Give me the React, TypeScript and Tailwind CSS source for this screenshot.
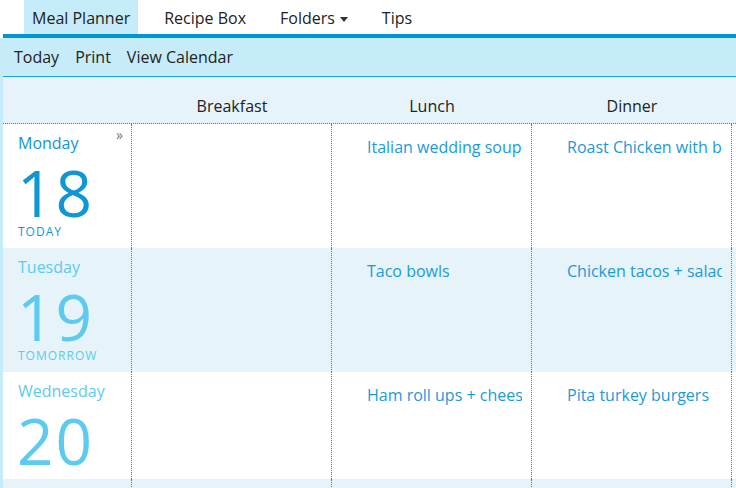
import React from "react";

type Day = {
  name: string;
  date: number;
  label?: string;
  today?: boolean;
  shaded?: boolean;
  height: string;
  meals: string[];
};

const days: Day[] = [
  { name: "Monday", date: 18, label: "TODAY", today: true, height: "h-[124px]", meals: ["", "Italian wedding soup", "Roast Chicken with broccoli", ""] },
  { name: "Tuesday", date: 19, label: "TOMORROW", shaded: true, height: "h-[124px]", meals: ["", "Taco bowls", "Chicken tacos + salad", ""] },
  { name: "Wednesday", date: 20, height: "h-[107px]", meals: ["", "Ham roll ups + cheese", "Pita turkey burgers", ""] },
  { name: "Thursday", date: 21, shaded: true, height: "h-[124px]", meals: ["", "", "", ""] },
];

const tabs = ["Meal Planner", "Recipe Box", "Folders", "Tips"];

function DayRow({ day }: { day: Day }) {
  const tone = day.today ? "text-[#0f96d6]" : "text-[#5ccbef]";
  return (
    <div className={`flex ${day.height} ${day.shaded ? "bg-[#e6f3f9]" : "bg-white"}`}>
      <div className="relative w-[129px] shrink-0 border-r border-dotted border-[#1a8bc4] pl-[15px] pt-[8px]">
        {day.today && <span className="absolute right-[8px] top-0 text-[14px] text-[#777]">»</span>}
        <div className={`text-[16px] leading-[22px] ${tone}`}>{day.name}</div>
        <div className={`-ml-[1px] mt-[13px] text-[64px] leading-[52px] tracking-[2px] ${tone}`}>{day.date}</div>
        {day.label && (
          <div className={`mt-[6px] text-[12px] leading-[14px] tracking-[1px] ${tone}`}>{day.label}</div>
        )}
      </div>
      {day.meals.map((m, i) => (
        <div
          key={i}
          className="w-[200px] shrink-0 border-r border-dotted border-[#1a8bc4] pl-[35px] pr-[9px] pt-[12px]"
        >
          <div className="overflow-hidden whitespace-nowrap text-[16px] leading-[22px] text-[#1b9ad8]">{m}</div>
        </div>
      ))}
    </div>
  );
}

export default function App() {
  return (
    <div className="h-[488px] w-[736px] overflow-hidden bg-white font-['Open_Sans',sans-serif] text-[#222]">
      <div className="flex h-[34px] items-stretch gap-[18px] pl-[24px]">
        {tabs.map((t, i) => (
          <div
            key={t}
            className={`flex items-center px-[8px] pt-[2px] text-[16px] ${i === 0 ? "bg-[#c6ecf9]" : ""}`}
          >
            {t}
            {t === "Folders" && (
              <span className="ml-[5px] mt-[2px] h-0 w-0 border-x-[4px] border-t-[5px] border-x-transparent border-t-[#333]" />
            )}
          </div>
        ))}
      </div>
      <div className="ml-[3px] h-[4px] bg-[#0095d5]" />
      <div className="overflow-hidden border-l-[3px] border-[#c6ecf9]">
        <div className="flex h-[39px] items-center gap-[16px] border-b border-[#1aa0dc] bg-[#c6ecf9] pl-[11px] text-[16px] leading-none">
          <span>Today</span>
          <span>Print</span>
          <span>View Calendar</span>
        </div>
        <div className="flex h-[47px] items-center border-b border-dotted border-[#1a8bc4] bg-[#e6f3fa] pt-[12px] text-[16px]">
          <div className="w-[129px] shrink-0" />
          {["Breakfast", "Lunch", "Dinner", ""].map((h, i) => (
            <div key={i} className="w-[200px] shrink-0 text-center">
              {h}
            </div>
          ))}
        </div>
        {days.map((d) => (
          <DayRow key={d.name} day={d} />
        ))}
      </div>
    </div>
  );
}
